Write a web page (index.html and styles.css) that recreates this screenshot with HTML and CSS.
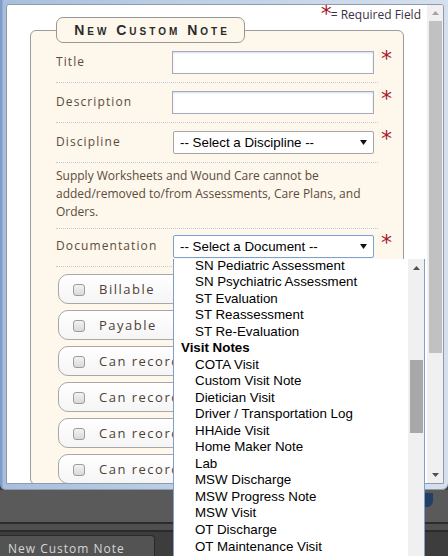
FILE: index.html
```html
<!DOCTYPE html>
<html>
<head>
<meta charset="utf-8">
<link rel="stylesheet" href="styles.css">
</head>
<body>
<div class="desk">
  <div class="win">
    <div class="client">
      <div class="page">
        <div class="req"><span class="rstar">*</span><span class="rtext">= Required Field</span></div>
        <fieldset class="box">
          <legend><span class="ltext">New Custom Note</span></legend>
          <div class="row">
            <div class="lbl">Title</div>
            <div class="inp"></div>
            <div class="ast">*</div>
          </div>
          <div class="row">
            <div class="lbl">Description</div>
            <div class="inp"></div>
            <div class="ast">*</div>
          </div>
          <div class="row">
            <div class="lbl">Discipline</div>
            <div class="sel"><span>-- Select a Discipline --</span><svg width="7" height="5" viewBox="0 0 7 5"><polygon points="0,0 7,0 3.5,5" fill="#111"/></svg></div>
            <div class="ast">*</div>
          </div>
          <div class="note">Supply Worksheets and Wound Care cannot be added/removed to/from Assessments, Care Plans, and Orders.</div>
          <div class="row row-doc">
            <div class="lbl">Documentation</div>
            <div class="sel sel-focus"><span>-- Select a Document --</span><svg width="7" height="5" viewBox="0 0 7 5"><polygon points="0,0 7,0 3.5,5" fill="#111"/></svg></div>
            <div class="ast">*</div>
          </div>
          <div class="checks">
            <div class="chk"><span class="cb"></span><span class="ctext">Billable</span></div>
            <div class="chk"><span class="cb"></span><span class="ctext">Payable</span></div>
            <div class="chk"><span class="cb"></span><span class="ctext">Can record</span></div>
            <div class="chk"><span class="cb"></span><span class="ctext">Can record</span></div>
            <div class="chk"><span class="cb"></span><span class="ctext">Can record</span></div>
            <div class="chk"><span class="cb"></span><span class="ctext">Can record</span></div>
          </div>
        </fieldset>
      </div>
      <div class="vscroll">
        <div class="sbtn"><svg width="7" height="4" viewBox="0 0 7 4"><polygon points="0,4 7,4 3.5,0" fill="#a3a3a3"/></svg></div>
        <div class="thumb"></div>
        <div class="sfill"></div>
        <div class="sbtn"><svg width="7" height="4" viewBox="0 0 7 4"><polygon points="0,0 7,0 3.5,4" fill="#505050"/></svg></div>
      </div>
    </div>
  </div>
  <div class="below"><div class="navy"></div></div>
  <div class="bar"><div class="tab">New Custom Note</div></div>

  <div class="popup">
    <div class="opts">
      <div class="opt">SN Pediatric Assessment</div>
      <div class="opt">SN Psychiatric Assessment</div>
      <div class="opt">ST Evaluation</div>
      <div class="opt">ST Reassessment</div>
      <div class="opt">ST Re-Evaluation</div>
      <div class="grp">Visit Notes</div>
      <div class="opt">COTA Visit</div>
      <div class="opt">Custom Visit Note</div>
      <div class="opt">Dietician Visit</div>
      <div class="opt">Driver / Transportation Log</div>
      <div class="opt">HHAide Visit</div>
      <div class="opt">Home Maker Note</div>
      <div class="opt">Lab</div>
      <div class="opt">MSW Discharge</div>
      <div class="opt">MSW Progress Note</div>
      <div class="opt">MSW Visit</div>
      <div class="opt">OT Discharge</div>
      <div class="opt">OT Maintenance Visit</div>
    </div>
    <div class="psb">
      <div class="pbtn"><svg width="7" height="4" viewBox="0 0 7 4"><polygon points="0,4 7,4 3.5,0" fill="#505050"/></svg></div>
      <div class="pthumb"></div>
    </div>
  </div>
</div>
</body>
</html>
```
FILE: styles.css
```css
* { box-sizing: border-box; }
html, body { margin: 0; padding: 0; }
body {
  width: 448px;
  height: 556px;
  overflow: hidden;
  background: #3d3d3d;
  font-family: "Open Sans", sans-serif;
}
.desk {
  position: relative;
  width: 448px;
  height: 556px;
  overflow: hidden;
  display: flex;
  flex-direction: column;
}

/* window frame */
.win {
  flex: none;
  height: 490px;
  padding: 4px 4px 6px 6px;
  background: linear-gradient(to right, #7f9dca 0, #7f9dca 2px, #a9bedc 3px, #bccfe6 40%, #d6e0ed 100%);
  border-radius: 0 0 6px 6px;
  box-shadow: inset 0 -1px 0 #8d99aa;
}
.client {
  height: 480px;
  display: flex;
  background: #fff;
  border: 1px solid #8e9bad;
  border-radius: 3px 3px 0 0;
  overflow: hidden;
}
.page {
  width: 420px;
  flex: none;
}

/* main scrollbar */
.vscroll {
  width: 16px;
  flex: none;
  display: flex;
  flex-direction: column;
  background: #f0f0f0;
}
.sbtn {
  height: 16px;
  flex: none;
  display: flex;
  align-items: center;
  justify-content: center;
}
.thumb {
  height: 332px;
  flex: none;
  margin: 0 1px 0 2px;
  background: #c1c1c1;
}
.sfill { flex: 1; }

/* required legend */
.req {
  height: 12px;
  display: flex;
  justify-content: flex-end;
  align-items: flex-start;
  padding-right: 6px;
  white-space: nowrap;
}
.rstar {
  font: 22px/14px "DejaVu Sans", sans-serif;
  color: #a8142c;
  margin-top: 2px;
  margin-right: -1px;
}
.rtext {
  font-size: 12px;
  line-height: 20px;
  color: #3b3145;
}

/* fieldset */
.box {
  margin: 0 23px;
  padding: 0 0 0 25px;
  border: 1px solid #9d9d9d;
  border-radius: 6px;
  background: #fdf7ec;
  min-width: 0;
}
.box legend {
  width: 189px;
  height: 26px;
  padding: 0;
  border: 1px solid #979797;
  border-radius: 7px;
  background: #fdf7ec;
  text-align: left;
}
.ltext {
  display: block;
  padding-left: 3px;
  text-align: center;
  font: bold 14px/24px "Liberation Sans", Arial, sans-serif;
  font-variant: small-caps;
  letter-spacing: 3px;
  color: #2b2b2b;
}

.row {
  display: flex;
  align-items: flex-start;
  width: 322px;
  padding: 8px 0;
  border-bottom: 1px dotted #c6c6de;
}
.row > * { flex: none; }
.row-doc { padding-top: 6px; }
.lbl {
  width: 116px;
  font-size: 12px;
  line-height: 21px;
  letter-spacing: 1.1px;
  color: #5c4b3b;
}
.inp {
  width: 202px;
  height: 23px;
  border: 1px solid #a9a9b9;
  background: #fff;
  box-shadow: inset 0 1px 2px rgba(110, 130, 210, 0.3);
}
.sel {
  width: 201px;
  height: 23px;
  margin-left: 1px;
  border: 1px solid #a5a5a5;
  border-radius: 2px;
  background: #fff;
  display: flex;
  align-items: center;
  justify-content: space-between;
  padding: 0 6px 0 6px;
  font: 13.33px/21px "Liberation Sans", Arial, sans-serif;
  color: #000;
}
.sel-focus { border-color: #7aa0d4; }
.ast {
  margin-left: 7px;
  font: 22px/22px "DejaVu Sans", sans-serif;
  color: #a8142c;
  margin-top: -3px;
}

.note {
  width: 322px;
  padding: 4px 0 7px;
  border-bottom: 1px dotted #c6c6de;
  font-size: 12px;
  line-height: 18px;
  color: #5c4b3b;
}

.checks {
  padding-top: 7px;
  display: flex;
  flex-direction: column;
  gap: 6px;
}
.chk {
  flex: none;
  margin-left: 2px;
  width: 318px;
  height: 30px;
  border: 1px solid #a8a8a8;
  border-radius: 10px;
  background: linear-gradient(#ffffff, #f5f5f5);
  display: flex;
  align-items: center;
  padding-left: 14px;
  white-space: nowrap;
  overflow: hidden;
}
.cb {
  flex: none;
  width: 12px;
  height: 12px;
  margin-top: 2px;
  border: 1px solid #9c9c9c;
  border-radius: 3px;
  background: linear-gradient(#f2f2f2, #d9d9d9);
}
.ctext {
  margin-left: 14px;
  font-size: 13px;
  letter-spacing: 1.5px;
  color: #4d4136;
}

/* below window */
.below {
  flex: none;
  height: 32px;
  background: #5a5a5a;
  display: flex;
  justify-content: flex-end;
  padding: 3px 15px 0 0;
}
.navy {
  width: 15px;
  height: 14px;
  background: #223f66;
  border-radius: 0 0 6px 0;
}
.bar {
  flex: 1;
  background: #3d3d3d;
  border-top: 2px solid #2c2c2c;
  box-shadow: inset 0 6px 0 #4f4f4f, inset 0 8px 0 #2b2b2b;
  padding-top: 11px;
}
.tab {
  width: 155px;
  height: 23px;
  background: #535353;
  border: 1px solid #2a2a2a;
  border-left: 0;
  border-bottom: 0;
  border-radius: 0 4px 0 0;
  padding: 3px 0 0 8px;
  font-size: 12px;
  line-height: 20px;
  letter-spacing: 1px;
  color: #d6d6d6;
  white-space: nowrap;
}

/* dropdown popup */
.popup {
  position: absolute;
  left: 173px;
  top: 259px;
  width: 252px;
  height: 300px;
  background: #fff;
  border: 1px solid #7f9fcc;
  border-top: 0;
  display: flex;
  overflow: hidden;
}
.opts {
  flex: 1;
  margin-top: -1.5px;
  font: 13.33px/16.53px "Liberation Sans", Arial, sans-serif;
  color: #000;
  white-space: nowrap;
}
.opt { padding-left: 21px; }
.grp { padding-left: 7px; font-weight: bold; }
.psb {
  width: 16px;
  flex: none;
  background: #f0f0f0;
}
.pbtn {
  height: 17px;
  display: flex;
  align-items: center;
  justify-content: center;
}
.pthumb {
  margin: 84px 1px 0 2px;
  height: 73px;
  background: #a8a8a8;
}
```
